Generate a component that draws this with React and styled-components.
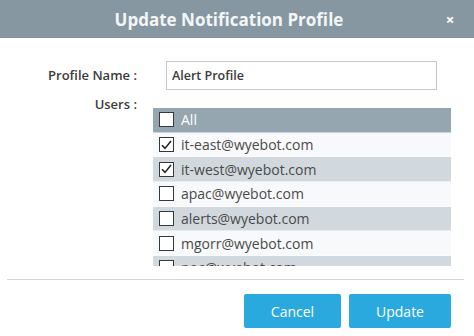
import React from 'react';
import styled, { createGlobalStyle } from 'styled-components';

const GlobalStyle = createGlobalStyle`
  html, body {
    margin: 0;
    padding: 0;
    background: #ffffff;
  }
  body {
    font-family: 'Open Sans', 'Noto Sans', sans-serif;
  }
`;

const Dialog = styled.div`
  width: 474px;
  height: 336px;
  background: #ffffff;
  display: flex;
  flex-direction: column;
`;

const Header = styled.div`
  height: 38px;
  background: #8797a2;
  display: flex;
  align-items: center;
  padding-right: 17px;
  box-sizing: border-box;
`;

const Title = styled.h1`
  flex: 1;
  margin: 0;
  padding-left: 15px;
  text-align: center;
  font-size: 17px;
  font-weight: 700;
  color: #f3f6f7;
`;

const CloseButton = styled.button`
  width: 14px;
  padding: 0;
  border: none;
  background: none;
  color: #ffffff;
  font-family: 'Open Sans', sans-serif;
  font-size: 15px;
  font-weight: 700;
  line-height: 1;
  cursor: pointer;
`;

const Form = styled.div`
  display: grid;
  grid-template-columns: 153px 298px;
  row-gap: 5px;
  padding-top: 23px;
`;

const Label = styled.label`
  text-align: right;
  padding-right: 16px;
  font-size: 13px;
  font-weight: 600;
  color: #3b3b3b;
  line-height: ${p => p.$tall ? '29px' : '18px'};
`;

const TextInput = styled.input`
  margin-left: 13px;
  width: 271px;
  height: 29px;
  box-sizing: border-box;
  border: 1px solid #c6c9cb;
  padding: 0 5px;
  font-family: 'Open Sans', sans-serif;
  font-size: 12.5px;
  font-weight: 600;
  color: #3a3a3a;
  outline: none;
`;

const UserList = styled.div`
  margin-top: 13px;
  height: 158px;
  overflow: hidden;
`;

const rowColor = { head: '#95a6b0', odd: '#f7f9fa', even: '#d1d9de' };

const Row = styled.div`
  height: 24.7px;
  display: flex;
  align-items: center;
  gap: 7px;
  padding-left: 6px;
  box-sizing: border-box;
  background: ${p => rowColor[p.$kind]};
  border-bottom: 1px solid rgba(255, 255, 255, 0.5);
  font-size: 14px;
  color: ${p => p.$kind === 'head' ? '#ffffff' : '#4a4a4a'};
  white-space: nowrap;
`;

const Box = styled.span`
  width: 15px;
  height: 15px;
  flex: none;
  box-sizing: border-box;
  border: 1.5px solid #333a3e;
  background: #ffffff;
  display: flex;
  align-items: center;
  justify-content: center;
`;

const Footer = styled.div`
  margin: 13px 10px 0 7px;
  border-top: 1px solid #d6d9db;
  display: flex;
  justify-content: flex-end;
  gap: 8px;
  padding: 14px 13px 0 0;
`;

const Button = styled.button`
  width: ${p => p.$w}px;
  height: 34px;
  border: none;
  border-radius: 2px;
  background: #2aa9df;
  color: #ffffff;
  font-family: 'Open Sans', sans-serif;
  font-size: 14px;
  cursor: pointer;
`;

const Check = () => (
  <svg width="11" height="10" viewBox="0 0 11 10">
    <path d="M1 5.2 L4 8.4 L10 1" fill="none" stroke="#222" strokeWidth="1.6" />
  </svg>
);

const users = [
  { email: 'it-east@wyebot.com', checked: true },
  { email: 'it-west@wyebot.com', checked: true },
  { email: 'apac@wyebot.com', checked: false },
  { email: 'alerts@wyebot.com', checked: false },
  { email: 'mgorr@wyebot.com', checked: false },
  { email: 'noc@wyebot.com', checked: false },
];

export default function App() {
  return (
    <>
      <GlobalStyle />
      <Dialog>
        <Header>
          <Title>Update Notification Profile</Title>
          <CloseButton>×</CloseButton>
        </Header>
        <Form>
          <Label $tall>Profile Name :</Label>
          <TextInput defaultValue="Alert Profile" />
          <Label>Users :</Label>
          <UserList>
            <Row $kind="head">
              <Box />
              All
            </Row>
            {users.map((u, i) => (
              <Row key={u.email} $kind={i % 2 === 0 ? 'odd' : 'even'}>
                <Box>{u.checked && <Check />}</Box>
                {u.email}
              </Row>
            ))}
          </UserList>
        </Form>
        <Footer>
          <Button $w={97}>Cancel</Button>
          <Button $w={102}>Update</Button>
        </Footer>
      </Dialog>
    </>
  );
}
